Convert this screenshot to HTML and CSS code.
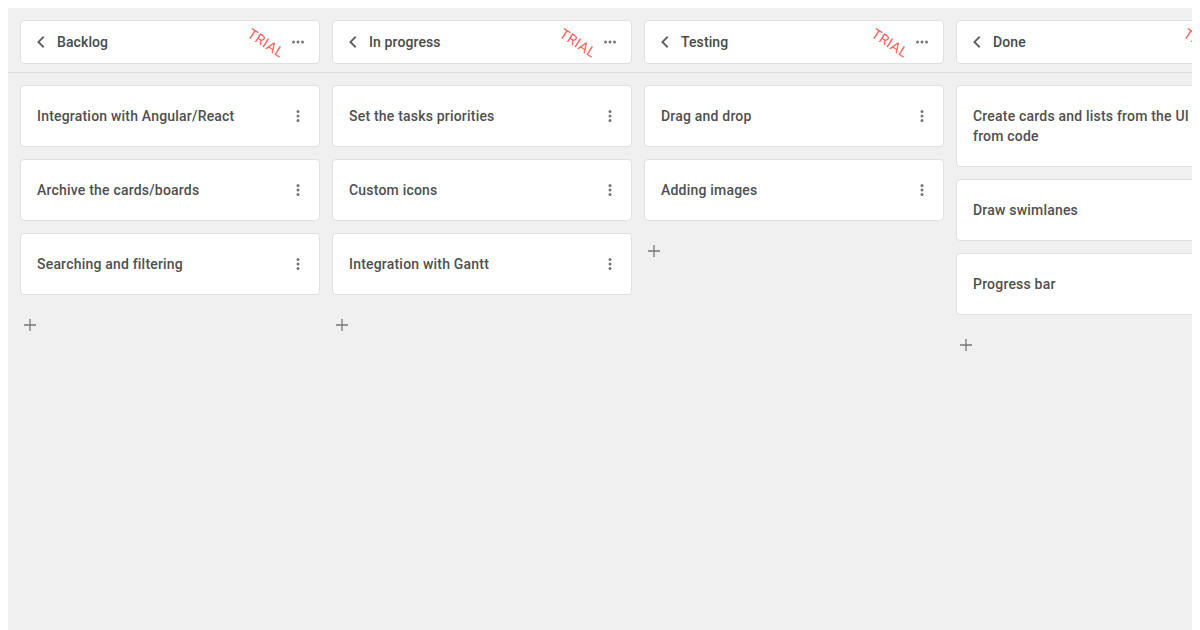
FILE: index.html
```html
<!DOCTYPE html>
<html lang="en">
<head>
    <meta charset="UTF-8">
    <meta name="viewport" content="width=device-width, initial-scale=1.0">
    <title>Kanban</title>
    <link rel="stylesheet" href="styles.css">
</head>
<body>

    <div class="board">
        <div class="board-head">
            <div class="list-head">
                <svg class="chevron" viewBox="0 0 24 24"><path d="M15.41 7.41L14 6l-6 6 6 6 1.41-1.41L10.83 12z"/></svg>
                <span class="list-title">Backlog</span>
                <span class="trial">TRIAL</span>
                <svg class="more" viewBox="0 0 24 24"><circle cx="6" cy="12" r="2"/><circle cx="12" cy="12" r="2"/><circle cx="18" cy="12" r="2"/></svg>
            </div>
            <div class="list-head">
                <svg class="chevron" viewBox="0 0 24 24"><path d="M15.41 7.41L14 6l-6 6 6 6 1.41-1.41L10.83 12z"/></svg>
                <span class="list-title">In progress</span>
                <span class="trial">TRIAL</span>
                <svg class="more" viewBox="0 0 24 24"><circle cx="6" cy="12" r="2"/><circle cx="12" cy="12" r="2"/><circle cx="18" cy="12" r="2"/></svg>
            </div>
            <div class="list-head">
                <svg class="chevron" viewBox="0 0 24 24"><path d="M15.41 7.41L14 6l-6 6 6 6 1.41-1.41L10.83 12z"/></svg>
                <span class="list-title">Testing</span>
                <span class="trial">TRIAL</span>
                <svg class="more" viewBox="0 0 24 24"><circle cx="6" cy="12" r="2"/><circle cx="12" cy="12" r="2"/><circle cx="18" cy="12" r="2"/></svg>
            </div>
            <div class="list-head">
                <svg class="chevron" viewBox="0 0 24 24"><path d="M15.41 7.41L14 6l-6 6 6 6 1.41-1.41L10.83 12z"/></svg>
                <span class="list-title">Done</span>
                <span class="trial">TRIAL</span>
                <svg class="more" viewBox="0 0 24 24"><circle cx="6" cy="12" r="2"/><circle cx="12" cy="12" r="2"/><circle cx="18" cy="12" r="2"/></svg>
            </div>
        </div>

        <div class="board-body">
            <div class="list">
                <div class="card"><span class="card-text">Integration with Angular/React</span><svg class="vmore" viewBox="0 0 24 24"><circle cx="12" cy="6" r="2"/><circle cx="12" cy="12" r="2"/><circle cx="12" cy="18" r="2"/></svg></div>
                <div class="card"><span class="card-text">Archive the cards/boards</span><svg class="vmore" viewBox="0 0 24 24"><circle cx="12" cy="6" r="2"/><circle cx="12" cy="12" r="2"/><circle cx="12" cy="18" r="2"/></svg></div>
                <div class="card"><span class="card-text">Searching and filtering</span><svg class="vmore" viewBox="0 0 24 24"><circle cx="12" cy="6" r="2"/><circle cx="12" cy="12" r="2"/><circle cx="12" cy="18" r="2"/></svg></div>
                <div class="add"><svg viewBox="0 0 12 12"><path d="M6 0v12M0 6h12"/></svg></div>
            </div>
            <div class="list">
                <div class="card"><span class="card-text">Set the tasks priorities</span><svg class="vmore" viewBox="0 0 24 24"><circle cx="12" cy="6" r="2"/><circle cx="12" cy="12" r="2"/><circle cx="12" cy="18" r="2"/></svg></div>
                <div class="card"><span class="card-text">Custom icons</span><svg class="vmore" viewBox="0 0 24 24"><circle cx="12" cy="6" r="2"/><circle cx="12" cy="12" r="2"/><circle cx="12" cy="18" r="2"/></svg></div>
                <div class="card"><span class="card-text">Integration with Gantt</span><svg class="vmore" viewBox="0 0 24 24"><circle cx="12" cy="6" r="2"/><circle cx="12" cy="12" r="2"/><circle cx="12" cy="18" r="2"/></svg></div>
                <div class="add"><svg viewBox="0 0 12 12"><path d="M6 0v12M0 6h12"/></svg></div>
            </div>
            <div class="list">
                <div class="card"><span class="card-text">Drag and drop</span><svg class="vmore" viewBox="0 0 24 24"><circle cx="12" cy="6" r="2"/><circle cx="12" cy="12" r="2"/><circle cx="12" cy="18" r="2"/></svg></div>
                <div class="card"><span class="card-text">Adding images</span><svg class="vmore" viewBox="0 0 24 24"><circle cx="12" cy="6" r="2"/><circle cx="12" cy="12" r="2"/><circle cx="12" cy="18" r="2"/></svg></div>
                <div class="add"><svg viewBox="0 0 12 12"><path d="M6 0v12M0 6h12"/></svg></div>
            </div>
            <div class="list">
                <div class="card"><span class="card-text">Create cards and lists from the UI and from code</span><svg class="vmore" viewBox="0 0 24 24"><circle cx="12" cy="6" r="2"/><circle cx="12" cy="12" r="2"/><circle cx="12" cy="18" r="2"/></svg></div>
                <div class="card"><span class="card-text">Draw swimlanes</span><svg class="vmore" viewBox="0 0 24 24"><circle cx="12" cy="6" r="2"/><circle cx="12" cy="12" r="2"/><circle cx="12" cy="18" r="2"/></svg></div>
                <div class="card"><span class="card-text">Progress bar</span><svg class="vmore" viewBox="0 0 24 24"><circle cx="12" cy="6" r="2"/><circle cx="12" cy="12" r="2"/><circle cx="12" cy="18" r="2"/></svg></div>
                <div class="add"><svg viewBox="0 0 12 12"><path d="M6 0v12M0 6h12"/></svg></div>
            </div>
        </div>
    </div>

</body>
</html>
```

FILE: styles.css
```css
body {
    margin: 8px;
    font-family: Roboto, "Liberation Sans", sans-serif;
    font-size: 14px;
    color: #505050;
    overflow: hidden;
}
.board {
    background-color: #f0f0f0;
    height: 622px;
    overflow: hidden;
}
.board-head {
    display: flex;
    gap: 12px;
    padding: 12px 12px 8px;
    border-bottom: 1px solid #dcdcdc;
}
.list-head {
    position: relative;
    flex: 0 0 300px;
    box-sizing: border-box;
    height: 44px;
    display: flex;
    align-items: center;
    padding: 0 12px 0 8px;
    background-color: white;
    border: 1px solid #e0e0e0;
    border-radius: 4px;
}
.chevron {
    width: 24px;
    height: 24px;
    fill: #666;
    flex-shrink: 0;
}
.list-title {
    margin-left: 4px;
    flex: 1;
    font-weight: 500;
    color: #4a4a4a;
    letter-spacing: 0.1px;
}
.trial {
    position: absolute;
    right: 33px;
    top: 14px;
    color: #ff5a5a;
    font-size: 14px;
    letter-spacing: 0.5px;
    transform: rotate(33deg);
}
.more {
    width: 18px;
    height: 18px;
    fill: #777;
}
.board-body {
    display: flex;
    gap: 12px;
    padding: 12px;
    align-items: flex-start;
}
.list {
    flex: 0 0 300px;
    display: flex;
    flex-direction: column;
    gap: 12px;
}
.card {
    display: flex;
    align-items: center;
    box-sizing: border-box;
    padding: 20px 12px 20px 16px;
    background-color: white;
    border: 1px solid #e0e0e0;
    border-radius: 4px;
    line-height: 20px;
}
.card-text {
    flex: 1;
    font-weight: 500;
    letter-spacing: 0.2px;
    padding-right: 4px;
}
.vmore {
    width: 18px;
    height: 18px;
    fill: #777;
    flex-shrink: 0;
}
.add {
    height: 36px;
    display: flex;
    align-items: center;
    padding-left: 4px;
}
.add svg {
    width: 12px;
    height: 12px;
    stroke: #777;
    stroke-width: 1.3;
}
```
